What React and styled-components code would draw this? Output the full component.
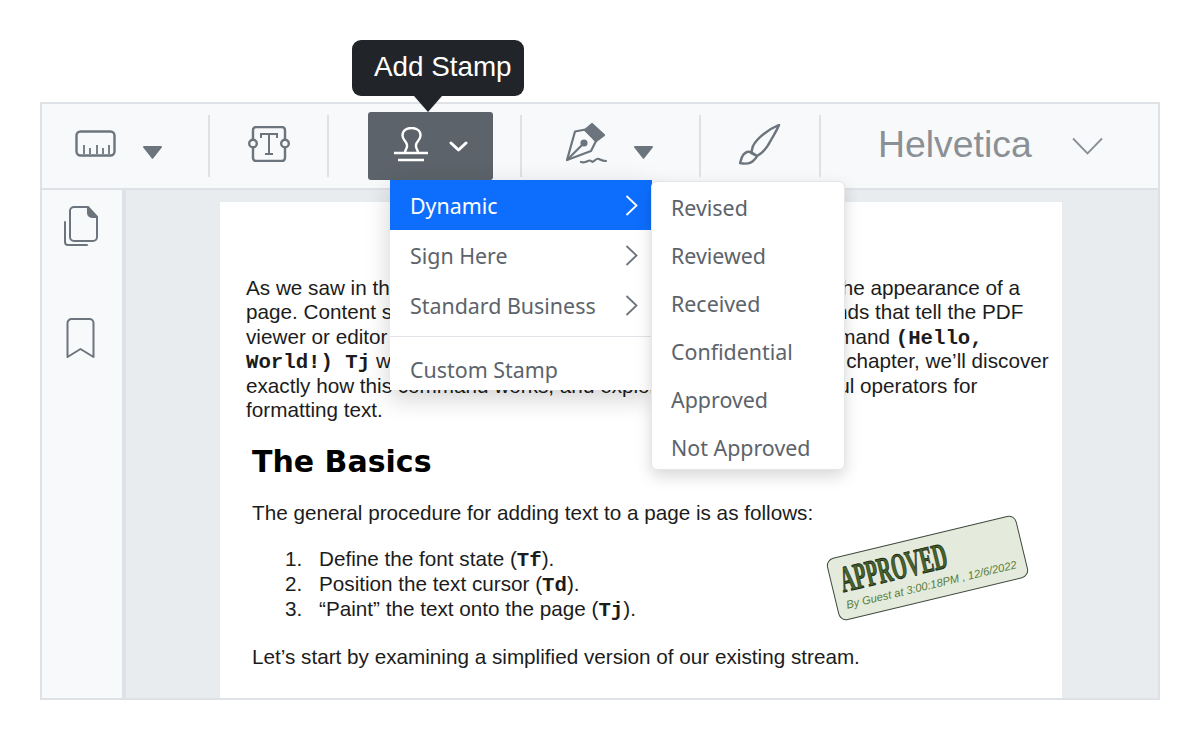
import styled, { createGlobalStyle } from "styled-components";

const GlobalStyle = createGlobalStyle`
  html, body {
    margin: 0;
    background: #fff;
    font-family: "Liberation Sans", Arial, sans-serif;
  }
`;

const Frame = styled.div`
  box-sizing: border-box;
  width: 1120px;
  height: 598px;
  margin: 102px 40px 0;
  border: 2px solid #dee2e6;
  display: flex;
  flex-direction: column;
`;

const Toolbar = styled.div`
  display: flex;
  align-items: center;
  flex: none;
  height: 84px;
  background: #f8f9fa;
  border-bottom: 2px solid #dee2e6;
`;

const ToolGroup = styled.div`
  display: flex;
  align-items: center;
  flex: none;
  box-sizing: border-box;
  width: ${(p) => p.$width}px;
  padding-left: ${(p) => p.$pad}px;
`;

const Separator = styled.div`
  flex: none;
  width: 2px;
  height: 62px;
  background: #dee2e6;
`;

const ToolIcon = styled.svg`
  flex: none;
  margin-bottom: ${(p) => p.$lift || 0}px;
`;

const Caret = styled.svg`
  flex: none;
  margin-left: ${(p) => p.$gap}px;
  margin-top: 11px;
`;

const StampButton = styled.div`
  position: relative;
  display: flex;
  align-items: center;
  width: 125px;
  height: 68px;
  padding-left: 26px;
  box-sizing: border-box;
  gap: 19px;
  background: #5c636a;
  border-radius: 3px;
`;

const Tooltip = styled.div`
  position: absolute;
  left: -16px;
  top: -72px;
  width: 172px;
  height: 56px;
  box-sizing: border-box;
  padding-left: 22px;
  background: #212529;
  border-radius: 9px;
  color: #fff;
  font-size: 27.8px;
  line-height: 54px;
  white-space: nowrap;

  &::after {
    content: "";
    position: absolute;
    left: 62px;
    top: 56px;
    border-style: solid;
    border-width: 16px 14px 0;
    border-color: #212529 transparent transparent;
  }
`;

const Menu = styled.div`
  position: absolute;
  left: 22px;
  top: 68px;
  width: 262px;
  height: 210px;
  background: #fff;
  box-shadow: 0 8px 24px rgba(0, 0, 0, 0.18);
  z-index: 3;
`;

const MenuRow = styled.div`
  display: flex;
  align-items: center;
  justify-content: space-between;
  height: 50px;
  padding: 0 14px 0 20px;
  font-family: "Noto Sans", sans-serif;
  font-size: 21.4px;
  color: ${(p) => (p.$active ? "#fff" : "#5c636a")};
  background: ${(p) => (p.$active ? "#0d6efd" : "transparent")};
  white-space: nowrap;
`;

const MenuDivider = styled.div`
  height: 1px;
  margin-top: 6px;
  margin-bottom: 7px;
  background: #e2e3e8;
`;

const SubMenu = styled.div`
  position: absolute;
  left: 261px;
  top: 1px;
  width: 194px;
  height: 289px;
  box-sizing: border-box;
  padding: 2px 0;
  background: #fff;
  border: 1px solid #e4e6e8;
  border-radius: 6px;
  box-shadow: 0 6px 16px rgba(0, 0, 0, 0.16);
`;

const SubRow = styled.div`
  height: 48px;
  line-height: 47px;
  padding-left: 19px;
  font-family: "Noto Sans", sans-serif;
  font-size: 21.4px;
  color: #5c636a;
  white-space: nowrap;
`;

const FontPicker = styled.div`
  display: flex;
  align-items: center;
  gap: 40px;
  color: #8a9095;
`;

const FontName = styled.span`
  font-size: 37.4px;
  margin-bottom: 3px;
`;

const Body = styled.div`
  flex: 1;
  display: flex;
  min-height: 0;
`;

const Sidebar = styled.div`
  flex: none;
  width: 84px;
  box-sizing: border-box;
  padding: 16px 3px 0 0;
  display: flex;
  flex-direction: column;
  align-items: center;
  gap: 71px;
  background: #f8f9fa;
  border-right: 4px solid #dee2e6;
`;

const Canvas = styled.div`
  flex: 1;
  min-width: 0;
  overflow: hidden;
  padding: 12px 0 0 94px;
  background: #e9ecef;
`;

const Page = styled.div`
  position: relative;
  width: 842px;
  min-height: 600px;
  box-sizing: border-box;
  padding: 74px 0 0 26px;
  background: #fff;
  color: #1c1c1c;
  font-size: 20.7px;
`;

const Intro = styled.div`
  line-height: 24.4px;
`;

const Line = styled.div`
  height: 24.4px;
  white-space: nowrap;
`;

const Code = styled.code`
  font-family: "Liberation Mono", monospace;
  font-weight: 700;
  font-size: 20.7px;
  line-height: 1;
`;

const Heading = styled.h2`
  margin: 22px 0 21px 6px;
  height: 36px;
  line-height: 36px;
  font-family: "DejaVu Sans", sans-serif;
  font-weight: 700;
  font-size: 30px;
  color: #000;
`;

const Para = styled.p`
  margin: ${(p) => p.$top || 0}px 0 0 6px;
  line-height: 24px;
`;

const Steps = styled.ol`
  margin: 21px 0 0 6px;
  padding-left: 67px;
  list-style: none;
  counter-reset: step;
`;

const Step = styled.li`
  height: 25px;
  line-height: 25px;
  counter-increment: step;

  &::before {
    content: counter(step) ".";
    display: inline-block;
    width: 34px;
    margin-left: -34px;
  }
`;

const Stamp = styled.div`
  position: absolute;
  left: 610px;
  top: 334px;
  width: 195px;
  height: 64px;
  box-sizing: border-box;
  padding: 4px 0 0 9px;
  background: #e4ebdc;
  border: 1.5px solid #3e4a3e;
  border-radius: 8px;
  transform: rotate(-13.5deg);
`;

const StampTitle = styled.div`
  font-family: "Liberation Serif", serif;
  font-weight: 700;
  font-size: 37px;
  line-height: 37px;
  color: #46652a;
  -webkit-text-stroke: 1px #1f2a16;
  transform: scaleX(0.53);
  transform-origin: left center;
  white-space: nowrap;
`;

const StampNote = styled.div`
  font-style: italic;
  font-size: 11.2px;
  line-height: 14px;
  color: #5a7d3a;
  white-space: nowrap;
`;

const iconColor = "#6c757d";

const RulerIcon = () => (
  <ToolIcon $lift={5} width="42" height="27" viewBox="0 0 42 27" fill="none" stroke={iconColor} strokeWidth="2.400">
    <rect x="1.500" y="1.500" width="38" height="24" rx="4" />
    <path d="M9 24v-9M15 24v-6M22 24v-9M28 24v-6M34 24v-9" strokeWidth="1.800" />
  </ToolIcon>
);

const CaretIcon = ({ gap }) => (
  <Caret $gap={gap} width="21" height="14" viewBox="0 0 21 14">
    <path d="M2 1h17a1 1 0 0 1 .8 1.600l-8.500 10.600a1 1 0 0 1-1.600 0L1.200 2.600A1 1 0 0 1 2 1z" fill={iconColor} />
  </Caret>
);

const TextFieldIcon = () => (
  <ToolIcon $lift={5} width="42" height="36" viewBox="0 0 42 36" fill="none" stroke={iconColor} strokeWidth="2.400">
    <path d="M5 13V4a3 3 0 0 1 3-3h26a3 3 0 0 1 3 3v9M5 22v10a3 3 0 0 0 3 3h26a3 3 0 0 0 3-3V22" />
    <circle cx="5" cy="17.500" r="3.800" />
    <circle cx="37" cy="17.500" r="3.800" />
    <path d="M13 12V8h16v4M21 8v20M17 28h8" strokeWidth="2" />
  </ToolIcon>
);

const StampIcon = () => (
  <ToolIcon $lift={2} width="36" height="36" viewBox="0 0 36 36" fill="none" stroke="#fff" strokeWidth="2.400">
    <path d="M0 26h34M4 33h26" />
    <path d="M11 26C11 22 13.500 22 13 18C12.500 14 8.500 13 8.500 8.500C8.500 3.500 12.500 1 17.500 1C22.500 1 26.500 3.500 26.500 8.500C26.500 13 22.500 14 22 18C21.500 22 24 22 24 26" />
  </ToolIcon>
);

const ChevronDown = () => (
  <svg width="19" height="11" viewBox="0 0 19 11" fill="none" stroke="#fff" strokeWidth="3" strokeLinecap="round" strokeLinejoin="round">
    <path d="M2 2l7.500 7L17 2" />
  </svg>
);

const PenIcon = () => (
  <ToolIcon $lift={5} width="42" height="42" viewBox="0 0 42 42" fill="none" stroke={iconColor} strokeWidth="2.200" strokeLinejoin="round">
    <path d="M1 37L9 8.500L19.500 6.500L30 18L25 28Z" />
    <path d="M1 37L17 21" />
    <circle cx="18" cy="20" r="2.500" fill={iconColor} />
    <path d="M19 7L26 1L38 12L30 18Z" fill={iconColor} />
    <path d="M15 39c3 1 5 0 7-1s2-1 3 0 2 1 3 0 3-3 5-2 3 2 7 2" strokeLinecap="round" />
  </ToolIcon>
);

const BrushIcon = () => (
  <ToolIcon $lift={3} width="43" height="42" viewBox="0 0 43 42" fill="none" stroke={iconColor} strokeWidth="2.400" strokeLinejoin="round">
    <path d="M40 1C30 5 18 14 14 22C13 25 13 27 12 29L18 32C22 30 28 24 32 16C35 11 38 6 40 1Z" />
    <path d="M12 28C8 27 5 29 3 33L1 39C6 40 12 40 15 36C17 34 18 33 18 32Z" />
  </ToolIcon>
);

const ChevronRight = ({ color }) => (
  <svg width="13" height="21" viewBox="0 0 13 21" fill="none" stroke={color} strokeWidth="1.800">
    <path d="M1.500 1l10 9.500-10 9.500" />
  </svg>
);

const ThinChevron = () => (
  <svg width="31" height="18" viewBox="0 0 31 18" fill="none" stroke="#8a9095" strokeWidth="1.800">
    <path d="M1 1.500l14.500 15L30 1.500" />
  </svg>
);

const PagesIcon = () => (
  <svg width="34" height="41" viewBox="0 0 34 41" fill="none" stroke={iconColor} strokeWidth="2" strokeLinecap="round">
    <path d="M10 1h13l10 10v20a4 4 0 0 1-4 4H10a4 4 0 0 1-4-4V5a4 4 0 0 1 4-4z" />
    <path d="M24 1l9 10h-5a4 4 0 0 1-4-4z" fill={iconColor} />
    <path d="M1 16v20a3 3 0 0 0 3 3h19" />
  </svg>
);

const BookmarkIcon = () => (
  <svg width="29" height="41" viewBox="0 0 29 41" fill="none" stroke={iconColor} strokeWidth="2" strokeLinejoin="round">
    <path d="M1.500 39V5a4 4 0 0 1 4-4h18a4 4 0 0 1 4 4v34l-13-8z" />
  </svg>
);

const subItems = ["Revised", "Reviewed", "Received", "Confidential", "Approved", "Not Approved"];

export default function App() {
  return (
    <>
      <GlobalStyle />
      <Frame>
        <Toolbar>
          <ToolGroup $width={166} $pad={33}>
            <RulerIcon />
            <CaretIcon gap={25} />
          </ToolGroup>
          <Separator />
          <ToolGroup $width={117} $pad={38}>
            <TextFieldIcon />
          </ToolGroup>
          <Separator />
          <ToolGroup $width={191} $pad={39}>
            <StampButton>
              <Tooltip>Add Stamp</Tooltip>
              <StampIcon />
              <ChevronDown />
              <Menu>
                <MenuRow $active>
                  Dynamic <ChevronRight color="#fff" />
                </MenuRow>
                <MenuRow>
                  Sign Here <ChevronRight color="#6c757d" />
                </MenuRow>
                <MenuRow>
                  Standard Business <ChevronRight color="#6c757d" />
                </MenuRow>
                <MenuDivider />
                <MenuRow>Custom Stamp</MenuRow>
                <SubMenu>
                  {subItems.map((item) => (
                    <SubRow key={item}>{item}</SubRow>
                  ))}
                </SubMenu>
              </Menu>
            </StampButton>
          </ToolGroup>
          <Separator />
          <ToolGroup $width={177} $pad={44}>
            <PenIcon />
            <CaretIcon gap={25} />
          </ToolGroup>
          <Separator />
          <ToolGroup $width={118} $pad={38}>
            <BrushIcon />
          </ToolGroup>
          <Separator />
          <ToolGroup $width={330} $pad={57}>
            <FontPicker>
              <FontName>Helvetica</FontName>
              <ThinChevron />
            </FontPicker>
          </ToolGroup>
        </Toolbar>
        <Body>
          <Sidebar>
            <PagesIcon />
            <BookmarkIcon />
          </Sidebar>
          <Canvas>
            <Page>
              <Intro>
                <Line>As we saw in the previous chapter, each content stream defines the appearance of a</Line>
                <Line>page. Content streams contain a large sequence of PDF commands that tell the PDF</Line>
                <Line>
                  viewer or editor how to render the page. As an example, the command <Code>(Hello,</Code>
                </Line>
                <Line>
                  <Code>World!) Tj</Code> writes text onto the page at a given position. In this chapter, we’ll discover
                </Line>
                <Line>exactly how this command works, and explore several other useful operators for</Line>
                <Line>formatting text.</Line>
              </Intro>
              <Heading>The Basics</Heading>
              <Para>The general procedure for adding text to a page is as follows:</Para>
              <Steps>
                <Step>
                  Define the font state (<Code>Tf</Code>).
                </Step>
                <Step>
                  Position the text cursor (<Code>Td</Code>).
                </Step>
                <Step>
                  “Paint” the text onto the page (<Code>Tj</Code>).
                </Step>
              </Steps>
              <Para $top={24}>Let’s start by examining a simplified version of our existing stream.</Para>
              <Stamp>
                <StampTitle>APPROVED</StampTitle>
                <StampNote>By Guest at 3:00:18PM , 12/6/2022</StampNote>
              </Stamp>
            </Page>
          </Canvas>
        </Body>
      </Frame>
    </>
  );
}
